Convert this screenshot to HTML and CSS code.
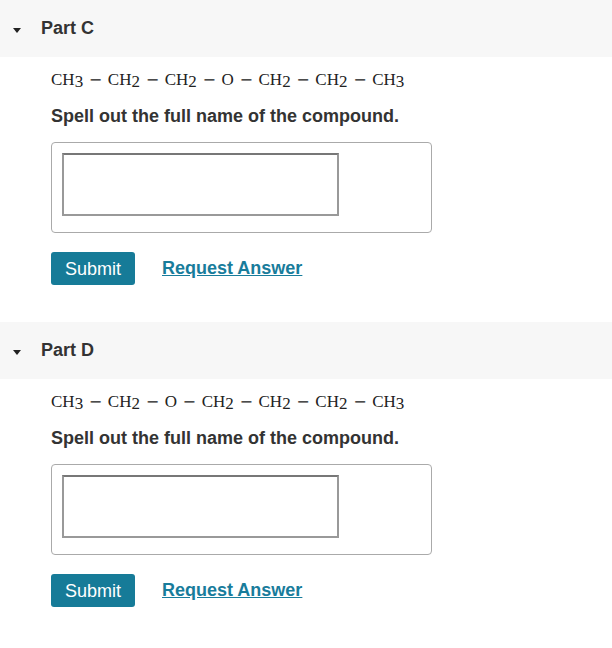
FILE: index.html
```html
<!DOCTYPE html>
<html>
<head>
    <title>Parts C and D</title>
    <meta name="viewport" content="width=device-width, initial-scale=1.0">
    <link rel="stylesheet" href="styles.css">
</head>
<body>
    <div class="part">
        <div class="part-header">
            <span class="caret"></span>
            <h2 class="part-title">Part C</h2>
        </div>
        <div class="part-body">
            <p class="formula">CH<sub>3</sub> <span class="op">−</span> CH<sub>2</sub> <span class="op">−</span> CH<sub>2</sub> <span class="op">−</span> O <span class="op">−</span> CH<sub>2</sub> <span class="op">−</span> CH<sub>2</sub> <span class="op">−</span> CH<sub>3</sub></p>
            <p class="prompt">Spell out the full name of the compound.</p>
            <div class="answer-box">
                <input type="text" class="answer-input">
            </div>
            <div class="actions">
                <button class="btn-submit">Submit</button>
                <a href="#" class="request-link">Request Answer</a>
            </div>
        </div>
    </div>

    <div class="part">
        <div class="part-header">
            <span class="caret"></span>
            <h2 class="part-title">Part D</h2>
        </div>
        <div class="part-body">
            <p class="formula">CH<sub>3</sub> <span class="op">−</span> CH<sub>2</sub> <span class="op">−</span> O <span class="op">−</span> CH<sub>2</sub> <span class="op">−</span> CH<sub>2</sub> <span class="op">−</span> CH<sub>2</sub> <span class="op">−</span> CH<sub>3</sub></p>
            <p class="prompt">Spell out the full name of the compound.</p>
            <div class="answer-box">
                <input type="text" class="answer-input">
            </div>
            <div class="actions">
                <button class="btn-submit">Submit</button>
                <a href="#" class="request-link">Request Answer</a>
            </div>
        </div>
    </div>
</body>
</html>
```

FILE: styles.css
```css
:root {
    --header-bg: #f7f7f7;
    --text: #333333;
    --teal: #167b98;
    --link: #187c9b;
}

body {
    margin: 0;
    font-family: 'Liberation Sans', Arial, sans-serif;
    color: var(--text);
    background: #ffffff;
}

.part {
    padding-bottom: 37px;
}

.part-header {
    display: flex;
    align-items: center;
    height: 57px;
    background: var(--header-bg);
    padding-left: 13px;
    box-sizing: border-box;
    padding-bottom: 2px;
}

.caret {
    width: 0;
    height: 0;
    border-left: 4.5px solid transparent;
    border-right: 4.5px solid transparent;
    border-top: 5px solid #222;
    margin-top: 6px;
    margin-right: 20px;
}

.part-title {
    margin: 0;
    font-size: 18px;
    font-weight: bold;
    line-height: 22px;
    color: #333;
}

.part-body {
    padding-left: 51px;
}

.formula {
    margin: 11px 0 0;
    font-family: 'Liberation Serif', 'DejaVu Serif', serif;
    font-size: 17px;
    line-height: 24px;
    color: #222;
    word-spacing: 1.4px;
}

/* subscripts render full size, just dropped a little */
.formula sub {
    font-size: inherit;
    vertical-align: -2px;
    line-height: 0;
}

.op {
    font-family: 'DejaVu Serif', serif;
    font-size: 16px;
}

.prompt {
    margin: 13px 0 0;
    font-size: 18px;
    font-weight: bold;
    line-height: 22px;
}

.answer-box {
    width: 381px;
    margin-top: 15px;
    border: 1px solid #aaaaaa;
    border-radius: 4px;
    padding: 10px 10px 16px;
    box-sizing: border-box;
}

.answer-input {
    display: block;
    width: 277px;
    height: 63px;
    box-sizing: border-box;
    border: 2px solid #999;
    border-top-color: #777;
    margin: 0;
    padding: 4px;
    font-size: 16px;
    font-family: inherit;
}

.actions {
    display: flex;
    align-items: center;
    gap: 27px;
    margin-top: 19px;
}

.btn-submit {
    width: 84px;
    height: 33px;
    background: var(--teal);
    color: #fff;
    border: none;
    border-radius: 3px;
    font-family: inherit;
    font-size: 18px;
    padding: 0;
    padding-top: 2px;
}

.request-link {
    color: var(--link);
    font-weight: bold;
    font-size: 18px;
    line-height: 22px;
    text-decoration: underline;
    margin-top: -1px;
}
```
